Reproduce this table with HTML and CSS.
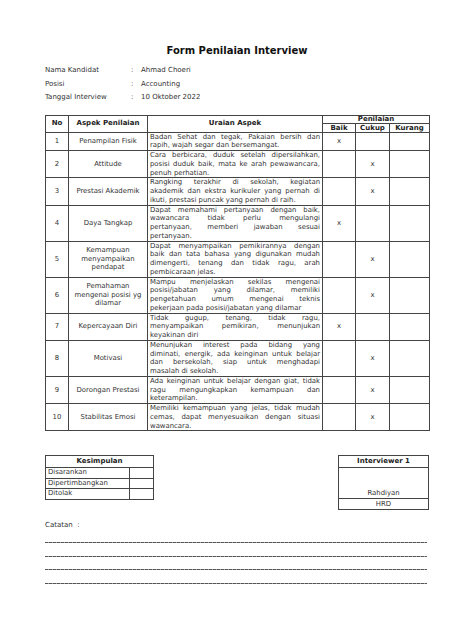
FILE: index.html
```html
<!DOCTYPE html>
<html>
<head>
<meta charset="utf-8">
<link rel="stylesheet" href="styles.css">
</head>
<body>
<div class="page">
  <h1 class="title">Form Penilaian Interview</h1>
  <div class="info">
    <span>Nama Kandidat</span><span>:</span><span>Ahmad Choeri</span>
    <span>Posisi</span><span>:</span><span>Accounting</span>
    <span>Tanggal Interview</span><span>:</span><span>10 Oktober 2022</span>
  </div>

  <table class="grid">
    <colgroup>
      <col class="c-no"><col class="c-asp"><col class="c-ur"><col class="c-b"><col class="c-c"><col class="c-k">
    </colgroup>
    <thead>
      <tr class="h1">
        <th rowspan="2">No</th>
        <th rowspan="2">Aspek Penilaian</th>
        <th rowspan="2">Uraian Aspek</th>
        <th colspan="3">Penilaian</th>
      </tr>
      <tr class="h2">
        <th>Baik</th><th>Cukup</th><th>Kurang</th>
      </tr>
    </thead>
    <tbody>
      <tr>
        <td>1</td><td>Penampilan Fisik</td>
        <td class="ur"><span class="ln">Badan Sehat dan tegak, Pakaian bersih dan</span><span class="ln">rapih, wajah segar dan bersemangat.</span></td>
        <td>x</td><td></td><td></td>
      </tr>
      <tr>
        <td>2</td><td>Attitude</td>
        <td class="ur"><span class="ln">Cara berbicara, duduk setelah dipersilahkan,</span><span class="ln">posisi duduk baik, mata ke arah pewawancara,</span><span class="ln">penuh perhatian.</span></td>
        <td></td><td>x</td><td></td>
      </tr>
      <tr>
        <td>3</td><td>Prestasi Akademik</td>
        <td class="ur"><span class="ln">Rangking terakhir di sekolah, kegiatan</span><span class="ln">akademik dan ekstra kurikuler yang pernah di</span><span class="ln">ikuti, prestasi puncak yang pernah di raih.</span></td>
        <td></td><td>x</td><td></td>
      </tr>
      <tr>
        <td>4</td><td>Daya Tangkap</td>
        <td class="ur"><span class="ln">Dapat memahami pertanyaan dengan baik,</span><span class="ln">wawancara tidak perlu mengulangi</span><span class="ln">pertanyaan, memberi jawaban sesuai</span><span class="ln">pertanyaan.</span></td>
        <td>x</td><td></td><td></td>
      </tr>
      <tr>
        <td>5</td><td>Kemampuan<br>menyampaikan<br>pendapat</td>
        <td class="ur"><span class="ln">Dapat menyampaikan pemikirannya dengan</span><span class="ln">baik dan tata bahasa yang digunakan mudah</span><span class="ln">dimengerti, tenang dan tidak ragu, arah</span><span class="ln">pembicaraan jelas.</span></td>
        <td></td><td>x</td><td></td>
      </tr>
      <tr>
        <td>6</td><td>Pemahaman<br>mengenai posisi yg<br>dilamar</td>
        <td class="ur"><span class="ln">Mampu menjelaskan sekilas mengenai</span><span class="ln">posisi/jabatan yang dilamar, memiliki</span><span class="ln">pengetahuan umum mengenai teknis</span><span class="ln">pekerjaan pada posisi/jabatan yang dilamar</span></td>
        <td></td><td>x</td><td></td>
      </tr>
      <tr>
        <td>7</td><td>Kepercayaan Diri</td>
        <td class="ur"><span class="ln">Tidak gugup, tenang, tidak ragu,</span><span class="ln">menyampaikan pemikiran, menunjukan</span><span class="ln">keyakinan diri</span></td>
        <td>x</td><td></td><td></td>
      </tr>
      <tr>
        <td>8</td><td>Motivasi</td>
        <td class="ur"><span class="ln">Menunjukan interest pada bidang yang</span><span class="ln">diminati, energik, ada keinginan untuk belajar</span><span class="ln">dan bersekolah, siap untuk menghadapi</span><span class="ln">masalah di sekolah.</span></td>
        <td></td><td>x</td><td></td>
      </tr>
      <tr>
        <td>9</td><td>Dorongan Prestasi</td>
        <td class="ur"><span class="ln">Ada keinginan untuk belajar dengan giat, tidak</span><span class="ln">ragu mengungkapkan kemampuan dan</span><span class="ln">keterampilan.</span></td>
        <td></td><td>x</td><td></td>
      </tr>
      <tr>
        <td>10</td><td>Stabilitas Emosi</td>
        <td class="ur"><span class="ln">Memiliki kemampuan yang jelas, tidak mudah</span><span class="ln">cemas, dapat menyesuaikan dengan situasi</span><span class="ln">wawancara.</span></td>
        <td></td><td>x</td><td></td>
      </tr>
    </tbody>
  </table>

  <div class="bottom">
    <table class="kes">
      <colgroup><col class="k1"><col class="k2"></colgroup>
      <tr><th colspan="2">Kesimpulan</th></tr>
      <tr><td>Disarankan</td><td></td></tr>
      <tr><td>Dipertimbangkan</td><td></td></tr>
      <tr><td>Ditolak</td><td></td></tr>
    </table>
    <div class="intv">
      <div class="intv-head">Interviewer 1</div>
      <div class="intv-body">Rahdiyan</div>
      <div class="intv-foot">HRD</div>
    </div>
  </div>

  <div class="catatan">Catatan&nbsp; :</div>
  <div class="lines">
    <div class="dash"></div>
    <div class="dash"></div>
    <div class="dash"></div>
    <div class="dash"></div>
  </div>
</div>
</body>
</html>
```

FILE: styles.css
```css
html, body {
  margin: 0;
  padding: 0;
  background: #fff;
}
body {
  font-family: "DejaVu Sans", Verdana, sans-serif;
  color: #222;
}
.page {
  width: 474px;
  height: 632px;
  box-sizing: border-box;
  padding: 45px 45px 0 45px;
}
.title {
  margin: 0;
  font-size: 10px;
  line-height: 12px;
  font-weight: bold;
  text-align: center;
  color: #111;
}
.info {
  display: grid;
  grid-template-columns: 86px 10px auto;
  grid-auto-rows: 13.5px;
  margin-top: 7px;
  font-size: 7px;
  line-height: 13.5px;
  color: #333;
}
.grid {
  margin-top: 10px;
  border-collapse: collapse;
  table-layout: fixed;
  width: 384px;
  font-size: 6.9px;
  color: #333;
}
.c-no { width: 23px; }
.c-asp { width: 79px; }
.c-ur { width: 175px; }
.c-b { width: 33px; }
.c-c { width: 34px; }
.c-k { width: 40px; }
.grid th, .grid td {
  border: 1px solid #444;
  padding: 0;
  text-align: center;
  vertical-align: middle;
}
.grid th {
  font-weight: bold;
  font-size: 7px;
  color: #222;
}
.grid .h1 th { line-height: 7px; }
.grid .h2 th { line-height: 8px; }
.grid td {
  line-height: 8.75px;
}
.grid td.ur {
  text-align: justify;
  padding: 0 2px;
  vertical-align: top;
}
.ln {
  display: block;
  text-align: justify;
  text-align-last: justify;
}
.ln:last-child {
  text-align-last: left;
}
.bottom {
  display: flex;
  justify-content: space-between;
  align-items: flex-start;
  margin-top: 24px;
  width: 384px;
}
.kes {
  border-collapse: collapse;
  table-layout: fixed;
  width: 108px;
  font-size: 6.9px;
  color: #333;
}
.k1 { width: 84px; }
.k2 { width: 24px; }
.kes th, .kes td {
  border: 1px solid #444;
  padding: 0 2px;
  height: 9.5px;
  line-height: 9.5px;
}
.kes th {
  font-size: 7px;
  font-weight: bold;
  text-align: center;
  height: 11px;
  color: #222;
}
.intv {
  width: 89px;
  border: 1px solid #444;
  font-size: 6.9px;
  color: #333;
  text-align: center;
}
.intv-head {
  font-size: 7px;
  font-weight: bold;
  color: #222;
  line-height: 11px;
  border-bottom: 1px solid #444;
}
.intv-body {
  height: 30px;
  display: flex;
  align-items: flex-end;
  justify-content: center;
  line-height: 9px;
  border-bottom: 1px solid #444;
}
.intv-foot {
  line-height: 10px;
}
.catatan {
  margin-top: 10px;
  font-size: 7px;
  line-height: 10px;
  color: #333;
}
.lines {
  display: flex;
  flex-direction: column;
  gap: 12.5px;
  margin-top: 12px;
  width: 382px;
}
.dash {
  height: 1px;
  background: repeating-linear-gradient(to right, #555 0 3px, #999 3px 4px);
}
```
